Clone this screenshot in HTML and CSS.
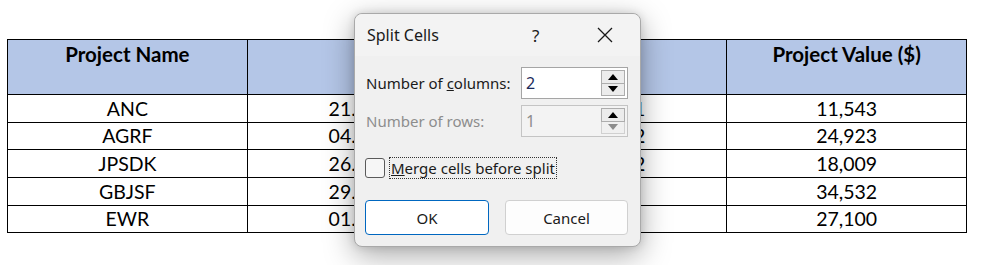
FILE: index.html
```html
<!DOCTYPE html>
<html>
<head>
<meta charset="utf-8">
<link rel="stylesheet" href="styles.css">
</head>
<body>
<div class="sheet">
  <table class="grid">
    <colgroup><col class="c"><col class="c"><col class="c"><col class="c"></colgroup>
    <thead>
      <tr class="head"><th>Project Name</th><th colspan="2">Duration</th><th>Project Value ($)</th></tr>
    </thead>
    <tbody>
      <tr class="r1"><td>ANC</td><td>21.01.21</td><td>15.11.21</td><td>11,543</td></tr>
      <tr class="r2"><td>AGRF</td><td>04.03.21</td><td>18.10.22</td><td>24,923</td></tr>
      <tr class="r3"><td>JPSDK</td><td>26.05.21</td><td>30.12.22</td><td>18,009</td></tr>
      <tr class="r4"><td>GBJSF</td><td>29.07.21</td><td>5.3.23</td><td>34,532</td></tr>
      <tr class="r5"><td>EWR</td><td>01.09.21</td><td>7.6.23</td><td>27,100</td></tr>
    </tbody>
  </table>
</div>

<div class="dialog">
  <div class="titlebar">
    <span class="title">Split Cells</span>
    <span class="help">?</span>
    <span class="close">
      <svg width="16" height="16" viewBox="0 0 16 16"><path d="M1 1 L15 15 M15 1 L1 15" stroke="#1a1a1a" stroke-width="1.3" fill="none"/></svg>
    </span>
  </div>
  <div class="body">
    <div class="field">
      <span class="label">Number of <u>c</u>olumns:</span>
      <div class="spin">
        <span class="value">2</span>
        <div class="arrows">
          <span class="arr up"><svg width="10" height="6" viewBox="0 0 10 6"><path d="M0 6 L5 0 L10 6 Z" fill="#000"/></svg></span>
          <span class="arr down"><svg width="10" height="6" viewBox="0 0 10 6"><path d="M0 0 L5 6 L10 0 Z" fill="#000"/></svg></span>
        </div>
      </div>
    </div>
    <div class="field disabled">
      <span class="label">Number of rows:</span>
      <div class="spin off">
        <span class="value">1</span>
        <div class="arrows">
          <span class="arr up"><svg width="10" height="6" viewBox="0 0 10 6"><path d="M0 6 L5 0 L10 6 Z" fill="#000"/></svg></span>
          <span class="arr down dim"><svg width="10" height="6" viewBox="0 0 10 6"><path d="M0 0 L5 6 L10 0 Z" fill="#8c8c8c"/></svg></span>
        </div>
      </div>
    </div>
    <div class="check">
      <span class="box"></span>
      <span class="clabel"><u>M</u>erge cells before split</span>
    </div>
    <div class="buttons">
      <button class="btn primary">OK</button>
      <button class="btn">Cancel</button>
    </div>
  </div>
</div>
</body>
</html>
```

FILE: styles.css
```css
html, body { margin: 0; padding: 0; background: #fff; }
body { position: relative; width: 982px; height: 265px; overflow: hidden; }

.sheet { padding: 39px 0 0 7px; }

.grid {
  border-collapse: collapse;
  table-layout: fixed;
  width: 959px;
  font-family: Lato, "Open Sans", sans-serif;
  font-size: 19.5px;
  color: #000;
}
.grid .c { width: 239.75px; }
.grid th, .grid td {
  border: 1px solid #000;
  padding: 0;
  text-align: center;
  overflow: hidden;
  white-space: nowrap;
}
.grid th {
  background: #b4c6e7;
  font-weight: bold;
  font-size: 20.5px;
  vertical-align: top;
  padding-top: 2px;
  height: 52px;
  line-height: 24px;
}
.grid td { line-height: 22px; }
.grid .r1 td { height: 27px; }
.grid .r2 td { height: 26px; }
.grid .r3 td { height: 27px; }
.grid .r4 td { height: 27px; }
.grid .r5 td { height: 26px; }

.dialog {
  position: absolute;
  left: 354px;
  top: 13px;
  width: 287px;
  height: 234px;
  box-sizing: border-box;
  border: 1px solid #a9a9a9;
  border-radius: 8px;
  background: #f0f0f0;
  box-shadow: 0 8px 30px rgba(0,0,0,0.35), 0 0 8px rgba(0,0,0,0.12);
  font-family: "Noto Sans", "Open Sans", sans-serif;
  font-size: 15px;
  color: #1a1a1a;
  display: flex;
  flex-direction: column;
}

.titlebar {
  height: 42px;
  display: flex;
  align-items: center;
  padding-left: 12px;
  background: #f3f3f3;
  border-radius: 8px 8px 0 0;
}
.title { font-size: 16px; flex: 1; }
.help { font-size: 17px; width: 14px; margin-right: 51px; color: #1a1a1a; }
.close { width: 16px; height: 16px; margin-right: 27px; display: flex; }

.body {
  padding: 11px 12px 0 10px;
  display: flex;
  flex-direction: column;
}

.field {
  display: grid;
  grid-template-columns: 1fr 107px;
  align-items: center;
  height: 32px;
  margin-bottom: 6px;
}
.field .label { padding-left: 1px; }
.field.disabled .label { color: #8d8d8d; }

.spin {
  height: 32px;
  box-sizing: border-box;
  border: 1px solid #a5a5a5;
  background: #fff;
  display: flex;
  align-items: center;
  justify-content: space-between;
  padding: 0 2px 0 4px;
}
.spin.off { background: #f3f3f3; border-color: #c4c4c4; }
.spin .value { color: #1b2a5a; font-size: 16px; }
.spin.off .value { color: #8d8d8d; }
.arrows {
  display: flex;
  flex-direction: column;
  width: 24px;
  height: 26px;
}
.arr {
  flex: 1;
  box-sizing: border-box;
  border: 1px solid #adadad;
  background: #ececec;
  display: flex;
  align-items: center;
  justify-content: center;
}
.arr.down { border-top: none; }
.arr.dim { background: #f0f0f0; border-color: #d0d0d0; }
.arr svg { display: block; }

.check {
  display: flex;
  align-items: center;
  margin-top: 14px;
  height: 22px;
}
.box {
  width: 18px;
  height: 18px;
  border: 1px solid #5a5a5a;
  border-radius: 3px;
  background: #f6f6f6;
  margin-right: 4px;
}
.clabel {
  font-size: 15px;
  border: 1px dotted #333;
  padding: 0 1px;
  line-height: 20px;
}

.buttons {
  display: flex;
  gap: 16px;
  margin-top: 21px;
}
.btn {
  width: 123px;
  height: 35px;
  box-sizing: border-box;
  border: 1px solid #d0d0d0;
  border-radius: 4px;
  background: #fdfdfd;
  font-family: "Noto Sans", "Open Sans", sans-serif;
  font-size: 15px;
  color: #1a1a1a;
  padding: 0;
}
.btn.primary { border: 1px solid #0067c0; width: 124px; background: #fff; }
```
